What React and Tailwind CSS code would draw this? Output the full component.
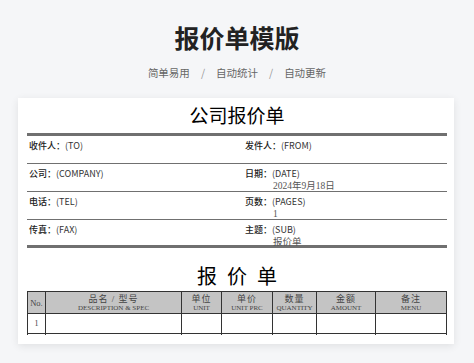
import React from 'react';

const CJK = "font-['Noto_Sans_CJK_SC',sans-serif]";
const SERIF = "font-['Liberation_Serif','Noto_Sans_CJK_SC',serif]";

/* ─── Filas de datos del encabezado ─── */
const ROWS = [
  { left: ['收件人：', '(TO)'], right: ['发件人：', '(FROM)'], extra: null },
  { left: ['公司：', '(COMPANY)'], right: ['日期：', '(DATE)'], extra: '2024年9月18日' },
  { left: ['电话：', '(TEL)'], right: ['页数：', '(PAGES)'], extra: '1' },
  { left: ['传真：', '(FAX)'], right: ['主题：', '(SUB)'], extra: '报价单' },
];

/* ─── Columnas de la tabla ─── */
const COLS = [
  { w: 'w-[18px]', zh: null, en: 'No.' },
  { w: 'w-[136px]', zh: '品名 / 型号', en: 'DESCRIPTION & SPEC' },
  { w: 'w-[40px]', zh: '单位', en: 'UNIT' },
  { w: 'w-[51px]', zh: '单价', en: 'UNIT PRC' },
  { w: 'w-[44px]', zh: '数量', en: 'QUANTITY' },
  { w: 'w-[59px]', zh: '金额', en: 'AMOUNT' },
  { w: 'flex-1', zh: '备注', en: 'MENU' },
];

function InfoRow({ row, last }) {
  return (
    <div className={`grid grid-cols-[218px_1fr] h-[28px] border-[#707070] ${last ? 'border-b-[3px]' : 'border-b'}`}>
      <div className="pl-[2px] pt-[3px] text-[9px] leading-[13px] text-[#333] whitespace-nowrap">
        <span className="font-medium text-[#222]">{row.left[0]}</span>
        <span>{row.left[1]}</span>
      </div>
      <div className="flex flex-col pt-[3px] text-[9px] leading-[13px] text-[#333] whitespace-nowrap">
        <div>
          <span className="font-medium text-[#222]">{row.right[0]}</span>
          <span>{row.right[1]}</span>
        </div>
        {row.extra && <span className={`ml-[28px] ${SERIF} text-[#555] text-[9.5px]`}>{row.extra}</span>}
      </div>
    </div>
  );
}

export default function App() {
  return (
    <div className={`w-[474px] h-[363px] overflow-hidden bg-[#f5f6f8] ${CJK}`}>
      {/* ══════ Encabezado ══════ */}
      <div className="pt-[21px] flex flex-col items-center">
        <h1 className="text-[25px] leading-[32px] font-bold text-[#222]">报价单模版</h1>
        <div className="mt-[12px] flex items-center gap-[11px] text-[10.5px] leading-[16px] text-[#666]">
          <span>简单易用</span>
          <span className="text-[#999]">/</span>
          <span>自动统计</span>
          <span className="text-[#999]">/</span>
          <span>自动更新</span>
        </div>
      </div>

      {/* ══════ Tarjeta del documento ══════ */}
      <div className="ml-[18px] mt-[17px] w-[436px] bg-white shadow-[0_2px_8px_rgba(0,0,0,0.09)] pl-[9px] pr-[7px] pt-[5px] pb-[9px]">
        <div className="text-center text-[19px] leading-[24px] text-black">公司报价单</div>
        <div className="mt-[6px] border-t-[3px] border-[#707070]">
          {ROWS.map((r, i) => (
            <InfoRow key={i} row={r} last={i === ROWS.length - 1} />
          ))}
        </div>

        <div className="mt-[16px] mb-[3px] text-center text-[20px] leading-[24px] tracking-[10px] pl-[10px] text-black">报价单</div>

        {/* ─── Tabla (recortada) ─── */}
        <div className="h-[44px] overflow-hidden border-t-[1.5px] border-l-[1.5px] border-[#333]">
          <div className="flex h-[22px] bg-[#c4c4c4] border-b-[1.5px] border-[#333]">
            {COLS.map((c, i) => (
              <div key={i} className={`${c.w} border-r-[1.5px] border-[#333] flex flex-col items-center justify-center ${SERIF} text-[#444]`}>
                {c.zh && <span className="text-[9px] leading-[10px] tracking-[1px]">{c.zh}</span>}
                <span className={c.zh ? 'text-[7px] leading-[8px]' : 'text-[8.5px] leading-[10px]'}>{c.en}</span>
              </div>
            ))}
          </div>
          <div className="flex h-[20px] border-b-[1.5px] border-[#333]">
            {COLS.map((c, i) => (
              <div key={i} className={`${c.w} border-r-[1.5px] border-[#333] flex items-center justify-center ${SERIF} text-[8px] text-[#444]`}>
                {i === 0 ? '1' : ''}
              </div>
            ))}
          </div>
          <div className="flex h-[20px]">
            {COLS.map((c, i) => (
              <div key={i} className={`${c.w} border-r-[1.5px] border-[#333]`} />
            ))}
          </div>
        </div>
      </div>
    </div>
  );
}
